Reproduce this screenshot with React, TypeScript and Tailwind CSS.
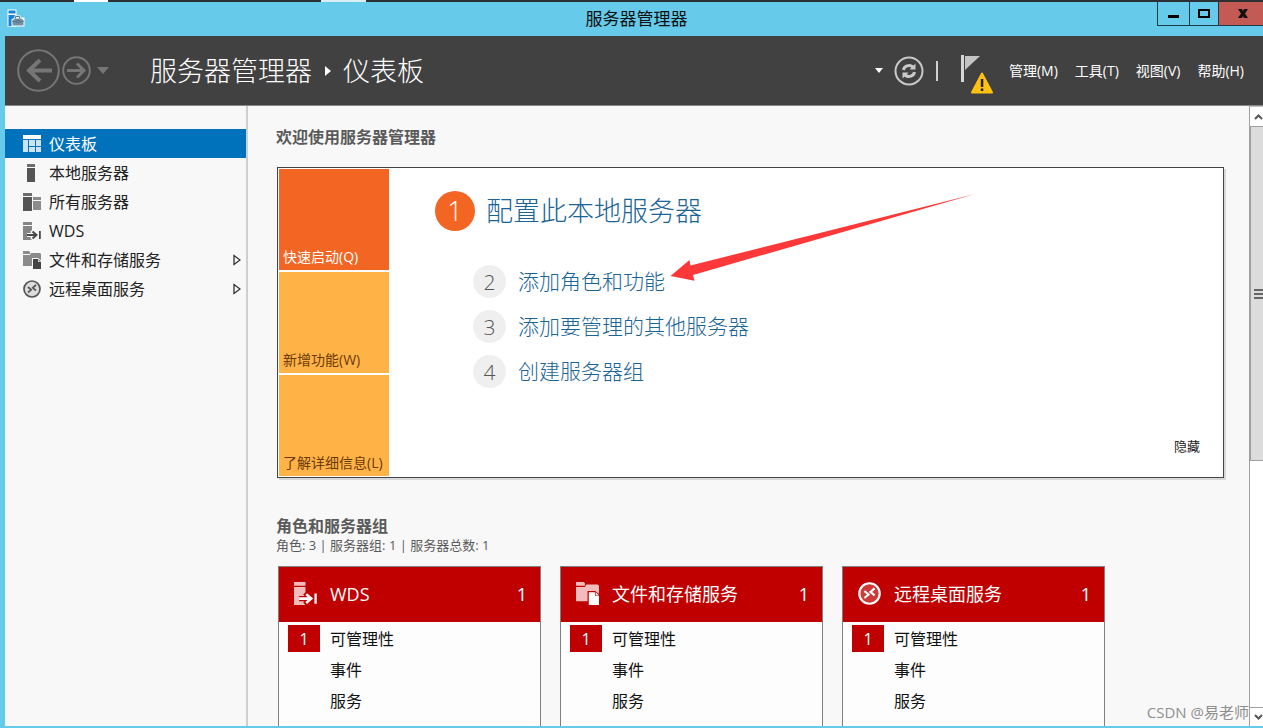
import type { ReactNode } from "react";

type IconProps = { light?: boolean };
type NavItem = { label: string; icon: ReactNode; active?: boolean; expandable?: boolean };
type Card = { title: string; icon: ReactNode; count: number };

function AppIcon() {
  return (
    <svg width="19" height="19" viewBox="0 0 19 19">
      <path d="M0.500 0.500h9v17h-9z" fill="#fff" />
      <path d="M1.500 1.500h7v3h-7zM1.500 6h7v3l-3 2v6h-4z" fill="#1583d8" />
      <path d="M7.500 8.500v-2h6v2h4v9h-13v-7l3-2z" fill="#fff" />
      <path d="M5.500 11.500l2-2h7l2 2v5h-11z" fill="#7391a6" />
      <path d="M8.500 9.500v-2h4v2M5.500 12.500h4m3 0h4M9.500 11.500h3v2h-3z" fill="none" stroke="#5b7688" />
    </svg>
  );
}

function DashboardIcon() {
  return (
    <svg width="18" height="18" viewBox="0 0 18 18">
      <path d="M0 0h18v4H0z" fill="#fff" />
      <path d="M0 5h5v12H0zM6 5h6v6H6zM13 5h5v6h-5zM6 12h6v5H6zM13 12h5v5h-5z" fill="#cbe3f3" />
    </svg>
  );
}

function ServerIcon() {
  return (
    <svg width="18" height="18" viewBox="0 0 18 18">
      <path d="M4 0h8v3H4z" fill="#6d6d6d" />
      <path d="M4 4h8v14H4z" fill="#555" />
    </svg>
  );
}

function ServersIcon() {
  return (
    <svg width="18" height="18" viewBox="0 0 18 18">
      <path d="M0 0h9v3H0z" fill="#6d6d6d" />
      <path d="M0 4h9v14H0z" fill="#555" />
      <path d="M10 4h8v3h-8zM10 8h8v9h-8z" fill="#8b8b8b" />
    </svg>
  );
}

function WdsIcon({ light }: IconProps) {
  const body = light ? "#f2bcbc" : "#858585";
  const arrow = light ? "#fff" : "#4a4a4a";
  const halo = light ? "#c00000" : "#f8f8f8";
  return (
    <svg className={light ? "size-[23px]" : "size-[18px]"} viewBox="0 0 18 18">
      <path d="M0 0h9v3H0zM0 4h9v14H0z" fill={body} />
      <path d="M4 13h8M8.500 8.500l5 4.500-5 4.500" fill="none" stroke={halo} strokeWidth="4" />
      <path d="M4 13h9M9.500 9.500l4 3.500-4 3.500" fill="none" stroke={arrow} strokeWidth="2" />
      <path d="M16 9h1.800v8H16z" fill={arrow} />
    </svg>
  );
}

function FilesIcon({ light }: IconProps) {
  const body = light ? "#f2bcbc" : "#8b8b8b";
  return (
    <svg className={light ? "size-[23px]" : "size-[18px]"} viewBox="0 0 18 18">
      <path d="M0 0h6l1 1v2H0zM0 4h7l1-2h9l1 1v12H0z" fill={body} />
      <path d="M9 7h6l4 3v9H9z" fill={light ? "#c00000" : "#f8f8f8"} />
      <path d="M10 8h5v3h3v7h-8z" fill={light ? "#fff" : "#444"} />
      <path d="M15.500 8l2.500 2.500h-2.500z" fill={light ? "#fff" : "#777"} />
    </svg>
  );
}

function RemoteIcon({ light }: IconProps) {
  const line = light ? "#fff" : "#555";
  return (
    <svg className={light ? "size-[23px]" : "size-[18px]"} viewBox="0 0 18 18">
      <circle cx="9" cy="9" r="8" fill={light ? "#cc3a3a" : "#dcdcdc"} stroke={line} strokeWidth="1.700" />
      <path d="M5 7l3.200 2.800L5 12.500M13 5L9.800 7.800 13 10.500" fill="none" stroke={line} strokeWidth="1.700" />
    </svg>
  );
}

const navItems: NavItem[] = [
  { label: "仪表板", icon: <DashboardIcon />, active: true },
  { label: "本地服务器", icon: <ServerIcon /> },
  { label: "所有服务器", icon: <ServersIcon /> },
  { label: "WDS", icon: <WdsIcon /> },
  { label: "文件和存储服务", icon: <FilesIcon />, expandable: true },
  { label: "远程桌面服务", icon: <RemoteIcon />, expandable: true },
];

const menus = ["管理(M)", "工具(T)", "视图(V)", "帮助(H)"];

const steps = ["添加角色和功能", "添加要管理的其他服务器", "创建服务器组"];

const cards: Card[] = [
  { title: "WDS", icon: <WdsIcon light />, count: 1 },
  { title: "文件和存储服务", icon: <FilesIcon light />, count: 1 },
  { title: "远程桌面服务", icon: <RemoteIcon light />, count: 1 },
];

function TitleBar() {
  return (
    <div className="shrink-0">
      <div className="flex h-[2px] bg-[#2d3133]">
        <span className="ml-[74px] w-[34px] bg-white" />
        <span className="ml-[213px] w-[45px] bg-[#d5f1f5]" />
      </div>
      <div className="grid h-[34px] grid-cols-[1fr_auto_1fr] bg-[#66caea]">
        <div className="pt-[7px] pl-[7px]">
          <AppIcon />
        </div>
        <h1 className="self-center pl-2.5 text-[17px] leading-6 text-[#111]">服务器管理器</h1>
        <div className="flex h-6 justify-self-end border-b border-l border-[#1b3a45]">
          <button aria-label="最小化" className="flex w-[31px] items-center justify-center">
            <svg width="12" height="12"><path d="M0 7h11v3H0z" fill="#000" /></svg>
          </button>
          <button aria-label="最大化" className="flex w-[29px] items-center justify-center border-l border-[#1b3a45]">
            <svg width="12" height="12"><path d="M1 2h10v7H1z" fill="none" stroke="#000" strokeWidth="2" /></svg>
          </button>
          <button aria-label="关闭" className="flex w-[45px] items-center justify-center border-l border-[#1b3a45] bg-[#c35b54] pl-1">
            <svg width="12" height="12"><path d="M1 1h4l1 2 1-2h4L8 5.500l3 4.500H7L6 8l-1 2H1l3-4.500z" fill="#111" /></svg>
          </button>
        </div>
      </div>
    </div>
  );
}

function Header() {
  return (
    <header className="flex h-[70px] shrink-0 items-center border-b border-[#8a8a8a] bg-[#414141] pr-[19px] pl-3 text-white">
      <button aria-label="后退">
        <svg width="43" height="43" viewBox="0 0 43 43" fill="none" stroke="#767676">
          <circle cx="21.500" cy="21.500" r="20.300" strokeWidth="2" />
          <path d="M35 21.500H11M23 11L12 21.500 23 32" strokeWidth="4" />
        </svg>
      </button>
      <button aria-label="前进" className="ml-[2px]">
        <svg width="29" height="29" viewBox="0 0 29 29" fill="none" stroke="#767676">
          <circle cx="14.500" cy="14.500" r="13.300" strokeWidth="2" />
          <path d="M5 14.500h17M15 7.500l7 7-7 7" strokeWidth="3" />
        </svg>
      </button>
      <button aria-label="历史记录" className="ml-1.5">
        <svg width="12" height="8"><path d="M0 0h12L6 7z" fill="#767676" /></svg>
      </button>
      <nav className="ml-[41px] flex items-center text-[27px] leading-9 font-light">
        <a href="#home">服务器管理器</a>
        <svg width="6" height="10" className="mr-3 ml-[13px]"><path d="M0 0l6 5-6 5z" fill="#fff" /></svg>
        <span>仪表板</span>
      </nav>
      <div className="ml-auto flex items-center">
        <button aria-label="刷新选项">
          <svg width="8" height="5" className="mr-[11px]"><path d="M0 0h8L4 5z" fill="#fff" /></svg>
        </button>
        <button aria-label="刷新">
          <svg width="30" height="30" viewBox="0 0 30 30" fill="none" stroke="#c9c9c9">
            <circle cx="15" cy="15" r="13.500" strokeWidth="2" />
            <path d="M9.500 14c.5-4 6-6 9.500-3M20.500 16c-.5 4-6 6-9.500 3" strokeWidth="3" />
            <path d="M21.500 7.500v6h-6zM8.500 22.500v-6h6z" fill="#c9c9c9" stroke="none" />
          </svg>
        </button>
        <span className="ml-3 h-5 w-[2px] bg-[#cfcfcf]" />
        <button aria-label="通知" className="ml-[22px]">
          <svg width="34" height="46" viewBox="0 -6 34 46">
            <path d="M1 1h3v27H1z" fill="#d6d6d6" />
            <path d="M5 2h15L5 16z" fill="#c4c4c4" />
            <path d="M22 19.500L32 38.500H12z" fill="#ffc20e" stroke="#ffc20e" strokeWidth="2" strokeLinejoin="round" />
            <path d="M20.800 25h2.500v8h-2.500zM20.800 34.500h2.500v2.500h-2.500z" fill="#222" />
          </svg>
        </button>
        <div className="ml-[15px] flex gap-[17px] text-[14px] leading-5">
          {menus.map((m) => (
            <button key={m}>{m}</button>
          ))}
        </div>
      </div>
    </header>
  );
}

function Sidebar() {
  return (
    <nav className="w-[243px] shrink-0 border-r-2 border-[#cfcfcf] pt-[23px]">
      {navItems.map((item) => (
        <a
          key={item.label}
          href="#nav"
          className={
            item.active
              ? "flex h-[29px] items-center bg-[#0072bc] pr-[5px] pl-[18px] text-[16px] leading-6 text-white"
              : "flex h-[29px] items-center pr-[5px] pl-[18px] text-[16px] leading-6 text-[#222]"
          }
        >
          {item.icon}
          <span className="ml-2">{item.label}</span>
          {item.expandable && (
            <svg width="8" height="12" className="ml-auto" fill="none" stroke="#333">
              <path d="M1 1.500v9L7 6z" strokeWidth="1.300" />
            </svg>
          )}
        </a>
      ))}
    </nav>
  );
}

function WelcomePanel() {
  return (
    <section className="mr-[25px] ml-[29px] flex border border-[#444] bg-white p-px shadow-[2px_2px_0_#d8d8d8]">
      <div className="flex w-[110px] shrink-0 flex-col gap-[2px] text-[14px] leading-5">
        <button className="flex h-[101px] items-end bg-[#f26522] px-1 pb-[3px] whitespace-nowrap text-white">快速启动(Q)</button>
        <button className="flex h-[101px] items-end bg-[#ffb347] px-1 pb-[3px] whitespace-nowrap text-[#6b3a0c]">新增功能(W)</button>
        <button className="flex h-[101px] items-end bg-[#ffb347] px-1 pb-[3px] whitespace-nowrap text-[#6b3a0c]">了解详细信息(L)</button>
      </div>
      <div className="flex-1 pt-[22px] pl-[46px] font-light">
        <div className="flex items-center gap-[11px]">
          <span className="flex size-10 items-center justify-center rounded-full bg-[#f26522] text-[27px] leading-9 text-white">1</span>
          <a href="#configure" className="text-[27px] leading-9 text-[#1a6496]">配置此本地服务器</a>
        </div>
        <ol className="relative mt-7 pl-[38px]">
          {steps.map((step, i) => (
            <li key={step} className="flex h-[45px] items-center gap-3">
              <span className="flex size-[33px] items-center justify-center rounded-full bg-[#efefef] text-[21px] leading-7 text-[#555]">{i + 2}</span>
              <a href="#step" className="pb-[2px] text-[21px] leading-7 text-[#1a6496]">{step}</a>
            </li>
          ))}
          <svg width="306" height="88" className="absolute -top-[65px] left-[235px]">
            <path d="M0.500 82L19.500 66l1 5.500L305 0 23 81l1.500 5.700z" fill="#fd3838" />
          </svg>
        </ol>
      </div>
      <button className="mr-[22px] mb-5 self-end text-[13px] leading-5 text-[#222]">隐藏</button>
    </section>
  );
}

function RoleCard({ title, icon, count }: Card) {
  return (
    <article className="w-[263px] shrink-0 border border-[#808080] bg-[#fdfdfd] text-[16px] leading-6 text-[#111]">
      <header className="flex h-[55px] items-center bg-[#c00000] pr-[13px] pb-[2px] pl-[15px] text-[18px] text-white">
        {icon}
        <h3 className="ml-[13px]">{title}</h3>
        <span className="ml-auto">{count}</span>
      </header>
      <ul className="h-[200px] pt-px pl-[9px]">
        <li className="flex h-[31px] items-center">
          <span className="flex h-[27px] w-8 items-center justify-center bg-[#c00000] text-white">{count}</span>
          <a href="#manage" className="ml-[10px]">可管理性</a>
        </li>
        <li className="flex h-[31px] items-center pl-[42px]">
          <a href="#events">事件</a>
        </li>
        <li className="flex h-[31px] items-center pl-[42px]">
          <a href="#services">服务</a>
        </li>
      </ul>
    </article>
  );
}

function Scrollbar() {
  return (
    <div className="flex w-[14px] shrink-0 flex-col overflow-hidden border-l border-[#a0a0a0] bg-white">
      <button aria-label="向上滚动" className="flex h-5 shrink-0 items-center border-t border-[#c0c0c0] pl-1">
        <svg width="9" height="6" className="shrink-0" fill="none" stroke="#555"><path d="M1 5l3.500-3.500L8 5" strokeWidth="2" /></svg>
      </button>
      <div className="flex shrink-0 basis-[335px] items-center border border-r-0 border-[#a0a0a0] bg-[#dcdcdc] pl-[3px]">
        <svg width="9" height="10" className="shrink-0"><path d="M0 0h9v2H0zM0 4h9v2H0zM0 8h9v2H0z" fill="#666" /></svg>
      </div>
      <button aria-label="向下滚动" className="mt-auto flex h-[19px] shrink-0 items-center border-t border-[#a0a0a0] pl-1">
        <svg width="9" height="6" className="shrink-0" fill="none" stroke="#555"><path d="M1 1l3.500 3.500L8 1" strokeWidth="2" /></svg>
      </button>
    </div>
  );
}

export default function App() {
  return (
    <div className="flex h-screen flex-col overflow-hidden bg-[#66caea] font-['Open_Sans','Noto_Sans_CJK_SC',sans-serif]">
      <TitleBar />
      <div className="mb-[2px] ml-[5px] flex min-h-0 flex-1 flex-col bg-[#f8f8f8]">
        <Header />
        <div className="relative flex min-h-0 flex-1">
          <Sidebar />
          <main className="min-w-0 flex-1 overflow-hidden pt-[19px]">
            <h2 className="mb-[18px] ml-7 text-[16px] leading-6 font-bold text-[#5a5a5a]">欢迎使用服务器管理器</h2>
            <WelcomePanel />
            <h2 className="mt-[38px] ml-7 text-[16px] leading-5 font-bold text-[#5a5a5a]">角色和服务器组</h2>
            <p className="ml-7 text-[13px] leading-[18px] text-[#5a5a5a]">角色: 3 | 服务器组: 1 | 服务器总数: 1</p>
            <div className="mt-3 ml-[30px] flex gap-[19px]">
              {cards.map((card) => (
                <RoleCard key={card.title} {...card} />
              ))}
            </div>
          </main>
          <Scrollbar />
          <span className="absolute right-[14px] bottom-1 text-[15px] leading-5 text-[#8f8f8f]">CSDN @易老师</span>
        </div>
      </div>
    </div>
  );
}
